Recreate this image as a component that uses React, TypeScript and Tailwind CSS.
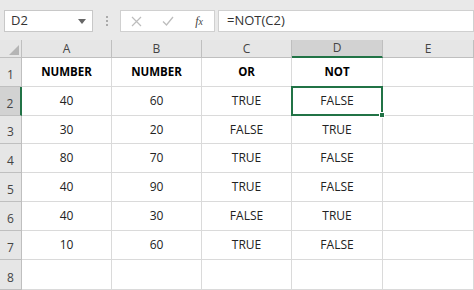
import React from 'react';

const rows: [string, string, string, string][] = [
  ['NUMBER', 'NUMBER', 'OR', 'NOT'],
  ['40', '60', 'TRUE', 'FALSE'],
  ['30', '20', 'FALSE', 'TRUE'],
  ['80', '70', 'TRUE', 'FALSE'],
  ['40', '90', 'TRUE', 'FALSE'],
  ['40', '30', 'FALSE', 'TRUE'],
  ['10', '60', 'TRUE', 'FALSE'],
  ['', '', '', ''],
];

const cols = ['A', 'B', 'C', 'D', 'E'];

const App = () => {
  return (
    <div className="w-[474px] h-[290px] overflow-hidden bg-white text-[#222] font-['Open_Sans',sans-serif]">
      {/* formula bar */}
      <div className="h-[40px] bg-[#e9e9e9] flex items-start pt-[10px] pl-[4px]">
        <div className="w-[89px] h-[22px] bg-white border border-[#c8c8c8] flex items-center justify-between pl-[6px] pr-[6px] text-[13px] text-[#333]">
          <span>D2</span>
          <svg width="8" height="5" viewBox="0 0 8 5"><path d="M0 0h8L4 5z" fill="#666" /></svg>
        </div>
        <div className="w-[27px] h-[22px] flex flex-col items-center justify-center gap-[2px]">
          <span className="w-[2px] h-[2px] bg-[#aaa]" />
          <span className="w-[2px] h-[2px] bg-[#aaa]" />
          <span className="w-[2px] h-[2px] bg-[#aaa]" />
        </div>
        <div className="w-[95px] h-[22px] bg-white border border-[#d0d0d0] flex items-center">
          <div className="w-[32px] flex justify-center">
            <svg width="11" height="11" viewBox="0 0 11 11"><path d="M1 1l9 9M10 1l-9 9" stroke="#bdbdbd" strokeWidth="1.2" /></svg>
          </div>
          <div className="w-[32px] flex justify-center">
            <svg width="12" height="10" viewBox="0 0 12 10"><path d="M1 5.5l3.5 3.5L11 1" stroke="#bdbdbd" strokeWidth="1.3" fill="none" /></svg>
          </div>
          <div className="w-[30px] flex justify-center text-[12px] italic text-[#444] font-['Liberation_Serif',serif]">
            <span>f<span className="text-[10px]">x</span></span>
          </div>
        </div>
        <div className="ml-[3px] flex-1 h-[22px] bg-white border border-[#d0d0d0] flex items-center pl-[8px] text-[13px] text-[#333]">
          =NOT(C2)
        </div>
      </div>

      {/* grid */}
      <div className="grid grid-cols-[22px_90px_90px_90px_91px_91px] grid-rows-[18px_29px_29px_28px_29px_29px_29px_29px_30px]">
        <div className="bg-[#e6e6e6] border-r border-b border-[#bfbfbf] flex items-end justify-end pr-[2px] pb-[2px]">
          <svg width="10" height="10" viewBox="0 0 10 10"><path d="M10 0v10H0z" fill="#b5b5b5" /></svg>
        </div>
        {cols.map((c) => (
          <div
            key={c}
            className={
              c === 'D'
                ? 'bg-[#d2d2d2] border-r border-[#bfbfbf] border-b-2 border-b-[#217346] flex items-center justify-center text-[12px] text-[#444]'
                : 'bg-[#e6e6e6] border-r border-b border-[#bfbfbf] flex items-center justify-center text-[12px] text-[#444]'
            }
          >
            {c}
          </div>
        ))}
        {rows.map((r, i) => (
          <React.Fragment key={i}>
            <div
              className={
                i === 1
                  ? 'bg-[#d2d2d2] border-b border-[#bfbfbf] border-r-2 border-r-[#217346] flex items-end justify-center pb-[2px] text-[12px] text-[#444]'
                  : 'bg-[#e6e6e6] border-r border-b border-[#bfbfbf] flex items-end justify-center pb-[2px] text-[12px] text-[#444]'
              }
            >
              {i + 1}
            </div>
            {r.map((v, j) => {
              const sel = i === 1 && j === 3;
              return (
                <div
                  key={j}
                  className={
                    sel
                      ? 'relative border-2 border-[#217346] -mt-px -ml-px flex items-center justify-center text-[12px]'
                      : 'border-r border-b border-[#dadada] flex items-center justify-center ' + (i === 0 ? 'font-bold text-black text-[11.5px]' : 'text-[12px]')
                  }
                >
                  {v}
                  {sel && <span className="absolute -right-[4px] -bottom-[4px] w-[6px] h-[6px] bg-[#217346] border border-white" />}
                </div>
              );
            })}
            <div className="border-r border-b border-[#dadada]" />
          </React.Fragment>
        ))}
      </div>
    </div>
  );
};

export default App;
